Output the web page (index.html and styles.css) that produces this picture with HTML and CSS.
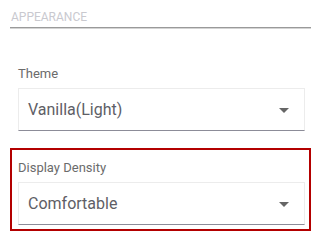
FILE: index.html
```html
<!DOCTYPE html>
<html lang="en">
<head>
    <meta charset="UTF-8">
    <title>Appearance</title>
    <link rel="stylesheet" href="styles.css">
</head>
<body>
    <div class="settings">
        <div class="section-title">APPEARANCE</div>

        <div class="field">
            <div class="field-label">Theme</div>
            <div class="select">
                <span class="select-value">Vanilla(Light)</span>
                <span class="select-arrow"></span>
            </div>
        </div>

        <!-- champ mis en évidence -->
        <div class="field highlighted">
            <div class="field-label">Display Density</div>
            <div class="select">
                <span class="select-value">Comfortable</span>
                <span class="select-arrow"></span>
            </div>
        </div>
    </div>
</body>
</html>
```

FILE: styles.css
```css
body {
    margin: 0;
    background: #fff;
    font-family: Roboto, "Liberation Sans", sans-serif;
}

.settings {
    width: 301px;
    padding: 10px 0 0 10px;
}

.section-title {
    font-size: 12px;
    line-height: 13px;
    color: #c9c9cf;
    padding: 1px 0 3px 1px;
    border-bottom: 1px solid #9a9a9a;
    box-shadow: 0 1px 0 #d4d4d4;
}

.field {
    padding: 38px 6px 0 8px;
}

.field-label {
    font-size: 13px;
    line-height: 16px;
    color: #6b6b6b;
    margin-bottom: 6px;
}

.select {
    display: flex;
    align-items: center;
    justify-content: space-between;
    height: 41px;
    padding: 0 15px 0 9px;
    border: 1px solid #ececec;
    border-bottom-color: #8c8c98;
}

.select-value {
    font-size: 16px;
    color: #5e5e66;
}

.select-arrow {
    width: 0;
    height: 0;
    border-left: 5px solid transparent;
    border-right: 5px solid transparent;
    border-top: 5px solid #666;
    margin-top: 2px;
}

.highlighted {
    margin-top: 17px;
    padding: 10px 4px 4px 6px;
    border: 2px solid #b30000;
}
```
